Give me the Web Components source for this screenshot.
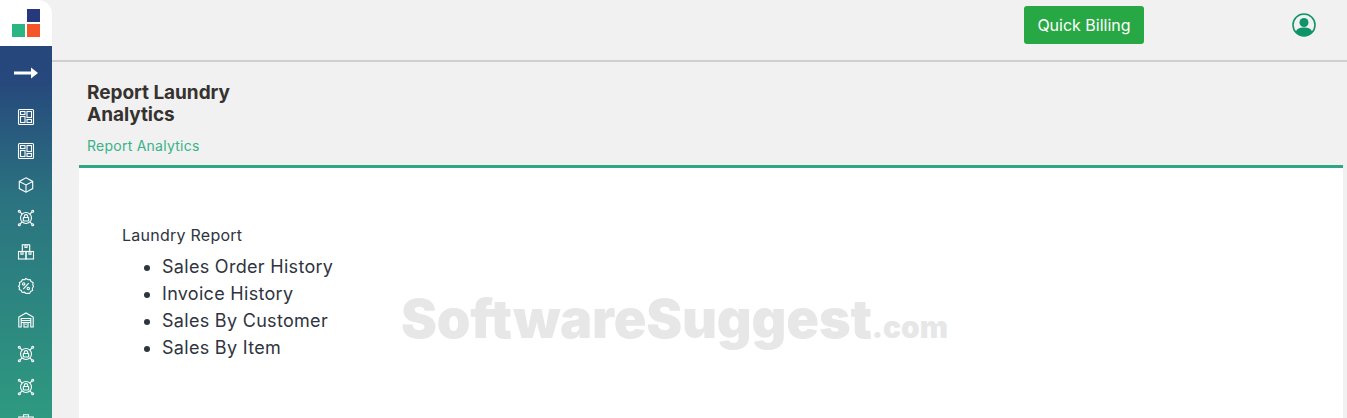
<!DOCTYPE html>
<html>
<head>
<meta charset="utf-8">
<title>Report Laundry Analytics</title>
<style>
    html, body { margin: 0; height: 100%; overflow: hidden; background: #f1f1f1; }
    body { font-family: "Inter", "Liberation Sans", sans-serif; position: relative; }
</style>
</head>
<body>
<app-shell>
    <side-nav slot="nav"></side-nav>
    <top-bar slot="top"></top-bar>
    <page-head slot="top" title-text="Report Laundry Analytics" crumb="Report Analytics"></page-head>
    <report-card heading="Laundry Report">
        <li>Sales Order History</li>
        <li>Invoice History</li>
        <li>Sales By Customer</li>
        <li>Sales By Item</li>
    </report-card>
</app-shell>
<water-mark></water-mark>

<script>
// icon shapes for the sidebar, all on a 16x16 box
const ICONS = {
    grid: `<rect x=".5" y=".5" width="15" height="15" rx="1"/><rect x="2.5" y="2.5" width="4.5" height="3"/><rect x="9" y="2.5" width="4.5" height="6"/><rect x="2.5" y="7.5" width="4.5" height="6"/><rect x="9" y="10.5" width="4.5" height="3"/>`,
    box: `<path d="M8 .8l6.7 3.6v7.2L8 15.2l-6.7-3.6V4.4z"/><path d="M1.3 4.4L8 8l6.7-3.600M8 8v7.2"/>`,
    lock: `<circle cx="8" cy="8" r="5.5"/><rect x="5.3" y="7.5" width="5.4" height="3.5" rx=".6"/><path d="M6.3 7.5V6.3a1.7 1.7 0 013.4 0v1.2"/><circle cx="1.3" cy="1.3" r="1"/><circle cx="14.7" cy="1.3" r="1"/><circle cx="1.3" cy="14.7" r="1"/><circle cx="14.7" cy="14.7" r="1"/><path d="M2 2l2.2 2.2M14 2l-2.2 2.2M2 14l2.2-2.2M14 14l-2.2-2.2"/>`,
    boxes: `<rect x="4.3" y=".8" width="7.4" height="6.7"/><rect x=".5" y="7.500" width="7.5" height="7.5"/><rect x="8" y="7.5" width="7.5" height="7.5"/><path d="M7 .8v2.7h2V.8M3 7.5v2.8h2V7.5M11 7.5v2.8h2V7.5"/>`,
    percent: `<path d="M8 .5l1.9 1.2 2.2-.2 1 2 2 1-.3 2.2L15.5 8.500l-1.200 1.800.3 2.200-2 1-1 2-2.200-.3L8 15.500l-1.600-1.300-2.200.3-1-2-2-1 .3-2.200L.5 8.500l1.200-1.800-.3-2.200 2-1 1-2 2.200.2z"/><path d="M10.700 5.200l-5.400 6"/><circle cx="5.700" cy="5.900" r="1.200"/><circle cx="10.300" cy="10.500" r="1.200"/>`,
    store: `<path d="M.8 15V5L8 1l7.2 4v10h-2.4V6.5H3.2V15z"/><path d="M3.2 8.5h9.6M3.2 10.5H6M10 10.5h2.8"/><rect x="6" y="10.5" width="4" height="4.5"/><path d="M7.2 12.3h1.600"/>`,
    case: `<rect x=".8" y="4" width="14.4" height="11"/><path d="M5.5 4V1.8h5V4M.8 8.5h14.4M6.5 7v3h3V7"/>`
};

class SideIcon extends HTMLElement {
    connectedCallback() {
        this.attachShadow({ mode: 'open' }).innerHTML = `
            <style>
                :host { display: block; height: 16px; width: 16px; }
                svg { display: block; fill: none; stroke: #fff; stroke-width: 1.1; overflow: visible; }
            </style>
            <svg width="16" height="16" viewBox="0 0 16 16">${ICONS[this.getAttribute('name')]}</svg>
        `;
    }
}
customElements.define('side-icon', SideIcon);

class SideNav extends HTMLElement {
    constructor() {
        super();
        const names = ['grid', 'grid', 'box', 'lock', 'boxes', 'percent', 'store', 'lock', 'lock', 'case'];
        this.attachShadow({ mode: 'open' }).innerHTML = `
            <style>
                :host { display: flex; flex-direction: column; width: 52px; height: 418px; flex: none; overflow: hidden; }
                .logo { height: 46px; background: #fff; border-top-right-radius: 14px; flex: none; display: flex; align-items: center; justify-content: center; }
                .rail { flex: 1; background: linear-gradient(180deg, #26477c 0, #26487c 34px, #2b7280 150px, #2e9a80 372px); }
                .arrow { height: 54px; display: flex; align-items: center; justify-content: center; }
                .items { display: flex; flex-direction: column; align-items: center; gap: 17.8px; padding-top: 9px; }
            </style>
            <div class="logo">
                <svg width="28" height="28" viewBox="0 0 28 28">
                    <rect x="15" y="0" width="13" height="13" fill="#26397c"/>
                    <rect x="0" y="15" width="13" height="13" fill="#2bb582"/>
                    <rect x="15" y="15" width="13" height="13" fill="#f4562a"/>
                </svg>
            </div>
            <div class="rail">
                <div class="arrow">
                    <svg width="24" height="12" viewBox="0 0 24 12"><path d="M0 4.4h17V.5L24 6l-7 5.5V7.6H0z" fill="#fff"/></svg>
                </div>
                <div class="items">${names.map(n => `<side-icon name="${n}"></side-icon>`).join('')}</div>
            </div>
        `;
    }
}
customElements.define('side-nav', SideNav);

class TopBar extends HTMLElement {
    constructor() {
        super();
        this.attachShadow({ mode: 'open' }).innerHTML = `
            <style>
                :host { display: flex; align-items: flex-start; height: 54px; padding-top: 6px; border-bottom: 2px solid #cfcfcf; }
                button { margin-left: 972px; width: 120px; height: 38px; border: 0; border-radius: 3px; background: #28a745; color: #fff; padding: 0;
                    font: 400 16px "Inter", "Liberation Sans", sans-serif; }
                svg { margin: 7px 0 0 148px; }
            </style>
            <button>Quick Billing</button>
            <svg width="24" height="24" viewBox="0 0 24 24">
                <circle cx="12" cy="12" r="11" fill="none" stroke="#0e9468" stroke-width="1.6"/>
                <circle cx="12" cy="9.5" r="4.5" fill="#0e9468"/>
                <path d="M3.8 19c1-3.5 4-4.5 8.200-4.500s7.200 1 8.200 4.500A11 11 0 0112 23a11 11 0 01-8.200-4z" fill="#0e9468"/>
            </svg>
        `;
    }
}
customElements.define('top-bar', TopBar);

class PageHead extends HTMLElement {
    connectedCallback() {
        this.attachShadow({ mode: 'open' }).innerHTML = `
            <style>
                :host { display: block; padding: 20px 0 0 35px; height: 83px; }
                h1 { margin: 0; width: 170px; font: 700 19px/22px "Inter", "Liberation Sans", sans-serif; letter-spacing: -.05px; color: #35322f; }
                div { margin-top: 11px; font: 400 14px/18px "Inter", "Liberation Sans", sans-serif; letter-spacing: .25px; color: #38b289; }
            </style>
            <h1>${this.getAttribute('title-text')}</h1>
            <div>${this.getAttribute('crumb')}</div>
        `;
    }
}
customElements.define('page-head', PageHead);

class ReportCard extends HTMLElement {
    connectedCallback() {
        this.attachShadow({ mode: 'open' }).innerHTML = `
            <style>
                :host { display: block; box-sizing: border-box; margin: 0 4px 0 27px; height: 253px; background: #fff; border-top: 3px solid #2fa684; padding: 57px 0 0 43px; color: #2f3440; }
                p { margin: 0 0 8px; font: 400 16px/20px "Inter", "Liberation Sans", sans-serif; letter-spacing: .25px; }
                ul { margin: 0; padding-left: 40px; font: 400 18px/27px "Inter", "Liberation Sans", sans-serif; letter-spacing: .3px; }
            </style>
            <p>${this.getAttribute('heading')}</p>
            <ul><slot></slot></ul>
        `;
    }
}
customElements.define('report-card', ReportCard);

// overlay stamp, sits over the card
class WaterMark extends HTMLElement {
    constructor() {
        super();
        this.attachShadow({ mode: 'open' }).innerHTML = `
            <style>
                :host { position: absolute; left: 401px; top: 288px; color: #e7e7e7; white-space: nowrap; font: 900 54px/62px "Inter", "Liberation Sans", sans-serif; letter-spacing: -.2px; }
                span { font-size: 30px; letter-spacing: 0; }
            </style>
            SoftwareSuggest<span>.com</span>
        `;
    }
}
customElements.define('water-mark', WaterMark);

class AppShell extends HTMLElement {
    constructor() {
        super();
        this.attachShadow({ mode: 'open' }).innerHTML = `
            <style>
                :host { display: flex; width: 1347px; height: 418px; overflow: hidden; }
                main { flex: 1; min-width: 0; }
            </style>
            <slot name="nav"></slot>
            <main><slot name="top"></slot><slot></slot></main>
        `;
    }
}
customElements.define('app-shell', AppShell);
</script>
</body>
</html>
